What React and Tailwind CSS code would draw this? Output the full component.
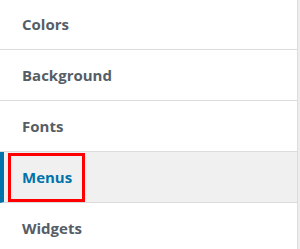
import React from "react";

const sections = ["Colors", "Background", "Fonts", "Menus", "Widgets"];

function App() {
  const active = "Menus";

  return (
    <div className="flex w-[300px] h-[249px] overflow-hidden bg-white" style={{ fontFamily: '"Open Sans", "Noto Sans", sans-serif' }}>
      {/* Liste der Bereiche */}
      <ul className="relative flex-1 -mt-px">
        {sections.map((name) => (
          <li
            key={name}
            className={`h-[51px] flex items-center border-b border-[#dcdcde] text-[15px] font-bold ${
              name === active
                ? "bg-[#f0f0f1] text-[#0073aa] border-l-4 border-l-[#0073aa] pl-[18px]"
                : "text-[#555d66] pl-[22px]"
            }`}
          >
            {name}
          </li>
        ))}
        {/* Markierung */}
        <div className="absolute left-[8px] top-[154px] w-[77px] h-[49px] border-[3px] border-[#ff0000]" />
      </ul>
      {/* Rand rechts */}
      <div className="w-px bg-[#dcdcde]" />
      <div className="w-[2px] bg-[#ededed]" />
    </div>
  );
}

export default App;
